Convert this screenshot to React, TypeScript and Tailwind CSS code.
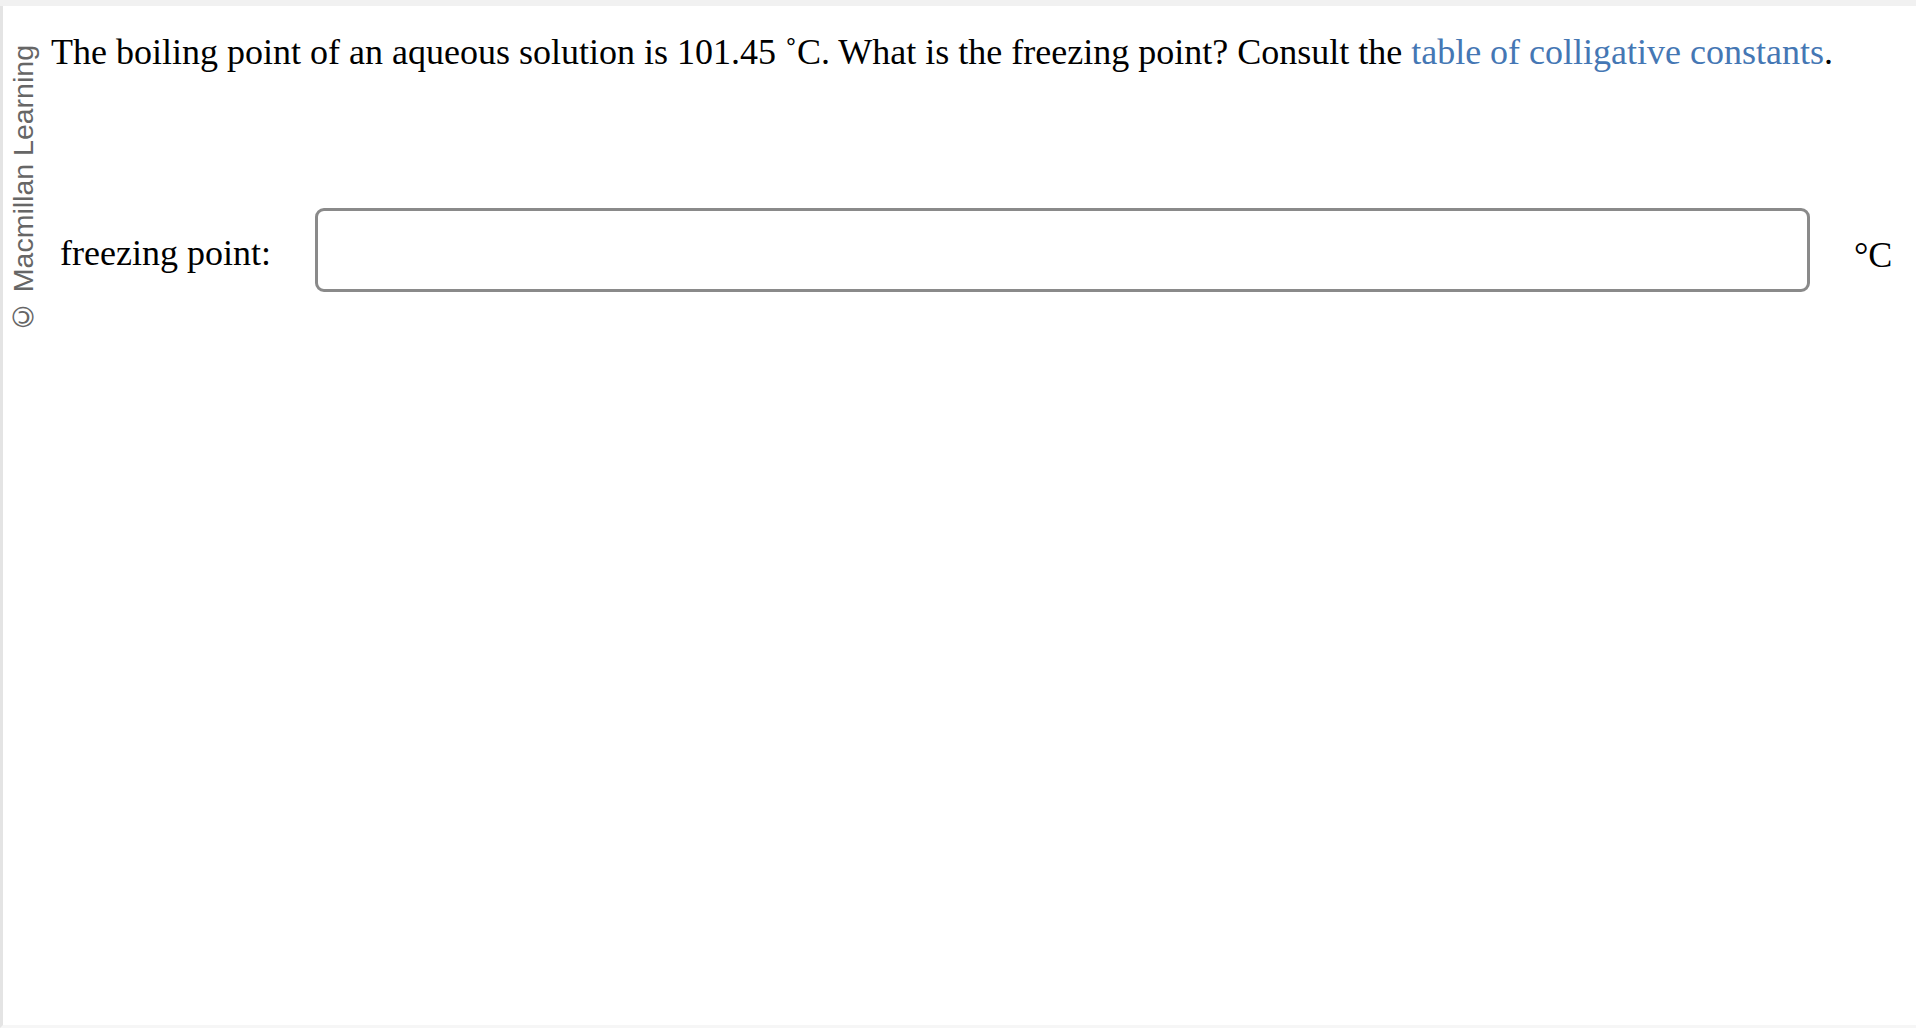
import React from 'react';

// Single question panel: watermark strip on the left, prompt + answer row on the right
const Watermark = () => (
  <div className="w-[48px] shrink-0 pl-[4px] pt-[39px]">
    <div className="[writing-mode:vertical-rl] rotate-180 font-['Liberation_Sans',Arial,sans-serif] text-[28.5px] leading-[33px] text-[#666666] whitespace-nowrap">
      <span className="font-['DejaVu_Sans',sans-serif] text-[29px]">©</span> Macmillan Learning
    </div>
  </div>
);

export default function App() {
  return (
    <div className="h-screen w-full flex flex-col bg-white overflow-hidden">
      {/* top strip */}
      <div className="h-[6px] bg-[#f1f1f1] shrink-0" />

      <div className="flex-1 flex border-l-[3px] border-[#e4e4e4] border-b-[3px] border-b-[#f6f6f6]">
        <Watermark />

        <div className="flex-1 flex flex-col font-['Liberation_Serif','Times_New_Roman',serif] text-[36px] leading-[40px] text-black">
          {/* prompt */}
          <p className="pt-[26px] whitespace-nowrap">
            The boiling point of an aqueous solution is 101.45 ˚C. What is the
            freezing point? Consult the{' '}
            <a href="#" className="text-[#4577b4]">
              table of colligative constants
            </a>
            .
          </p>

          {/* answer row */}
          <div className="flex items-start mt-[136px] pl-[9px]">
            <label className="mt-[25px] whitespace-nowrap">freezing point:</label>
            <input
              type="text"
              className="ml-[44px] w-[1495px] h-[84px] border-[3px] border-[#8a8a8a] rounded-[9px] outline-none px-3 bg-white"
            />
            <span className="ml-[44px] mt-[27px] whitespace-nowrap">°C</span>
          </div>
        </div>
      </div>
    </div>
  );
}
